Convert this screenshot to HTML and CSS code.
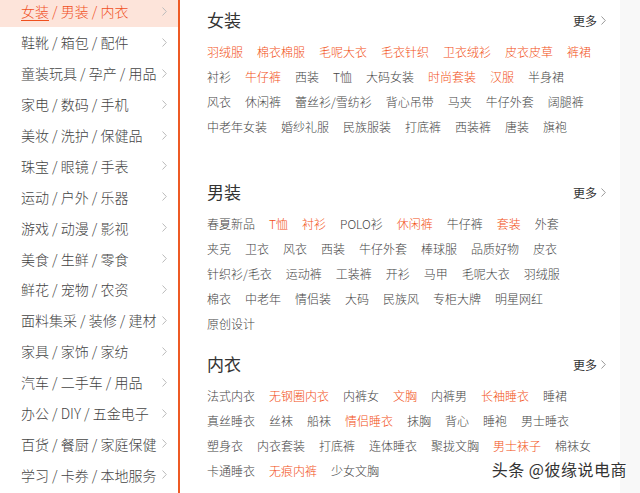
FILE: index.html
```html
<!DOCTYPE html>
<html lang="zh">
<head>
<meta charset="utf-8">
<link rel="stylesheet" href="styles.css">
</head>
<body>
<div class="page">
  <ul class="side">
    <li class="item active"><span class="label"><span class="hover">女装</span> / 男装 / 内衣</span><svg class="chev" viewBox="0 0 5 9"><path d="M0.5 0.5 L4.3 4.5 L0.5 8.5"/></svg></li>
    <li class="item"><span class="label">鞋靴 / 箱包 / 配件</span><svg class="chev" viewBox="0 0 5 9"><path d="M0.5 0.5 L4.3 4.5 L0.5 8.5"/></svg></li>
    <li class="item"><span class="label">童装玩具 / 孕产 / 用品</span><svg class="chev" viewBox="0 0 5 9"><path d="M0.5 0.5 L4.3 4.5 L0.5 8.5"/></svg></li>
    <li class="item"><span class="label">家电 / 数码 / 手机</span><svg class="chev" viewBox="0 0 5 9"><path d="M0.5 0.5 L4.3 4.5 L0.5 8.5"/></svg></li>
    <li class="item"><span class="label">美妆 / 洗护 / 保健品</span><svg class="chev" viewBox="0 0 5 9"><path d="M0.5 0.5 L4.3 4.5 L0.5 8.5"/></svg></li>
    <li class="item"><span class="label">珠宝 / 眼镜 / 手表</span><svg class="chev" viewBox="0 0 5 9"><path d="M0.5 0.5 L4.3 4.5 L0.5 8.5"/></svg></li>
    <li class="item"><span class="label">运动 / 户外 / 乐器</span><svg class="chev" viewBox="0 0 5 9"><path d="M0.5 0.5 L4.3 4.5 L0.5 8.5"/></svg></li>
    <li class="item"><span class="label">游戏 / 动漫 / 影视</span><svg class="chev" viewBox="0 0 5 9"><path d="M0.5 0.5 L4.3 4.5 L0.5 8.5"/></svg></li>
    <li class="item"><span class="label">美食 / 生鲜 / 零食</span><svg class="chev" viewBox="0 0 5 9"><path d="M0.5 0.5 L4.3 4.5 L0.5 8.5"/></svg></li>
    <li class="item"><span class="label">鲜花 / 宠物 / 农资</span><svg class="chev" viewBox="0 0 5 9"><path d="M0.5 0.5 L4.3 4.5 L0.5 8.5"/></svg></li>
    <li class="item"><span class="label">面料集采 / 装修 / 建材</span><svg class="chev" viewBox="0 0 5 9"><path d="M0.5 0.5 L4.3 4.5 L0.5 8.5"/></svg></li>
    <li class="item"><span class="label">家具 / 家饰 / 家纺</span><svg class="chev" viewBox="0 0 5 9"><path d="M0.5 0.5 L4.3 4.5 L0.5 8.5"/></svg></li>
    <li class="item"><span class="label">汽车 / 二手车 / 用品</span><svg class="chev" viewBox="0 0 5 9"><path d="M0.5 0.5 L4.3 4.5 L0.5 8.5"/></svg></li>
    <li class="item"><span class="label">办公 / DIY / 五金电子</span><svg class="chev" viewBox="0 0 5 9"><path d="M0.5 0.5 L4.3 4.5 L0.5 8.5"/></svg></li>
    <li class="item"><span class="label">百货 / 餐厨 / 家庭保健</span><svg class="chev" viewBox="0 0 5 9"><path d="M0.5 0.5 L4.3 4.5 L0.5 8.5"/></svg></li>
    <li class="item"><span class="label">学习 / 卡券 / 本地服务</span><svg class="chev" viewBox="0 0 5 9"><path d="M0.5 0.5 L4.3 4.5 L0.5 8.5"/></svg></li>
  </ul>

  <div class="panel">
    <section class="sec">
      <div class="head"><h2>女装</h2><a class="more">更多<svg class="chev-more" viewBox="0 0 5 9"><path d="M0.5 0.5 L4.3 4.5 L0.5 8.5"/></svg></a></div>
      <div class="tags">
        <a class="hot">羽绒服</a><a class="hot">棉衣棉服</a><a class="hot">毛呢大衣</a><a class="hot">毛衣针织</a><a class="hot">卫衣绒衫</a><a class="hot">皮衣皮草</a><a class="hot">裤裙</a>
        <a>衬衫</a><a class="hot">牛仔裤</a><a>西装</a><a>T恤</a><a>大码女装</a><a class="hot">时尚套装</a><a class="hot">汉服</a><a>半身裙</a>
        <a>风衣</a><a>休闲裤</a><a>蕾丝衫/雪纺衫</a><a>背心吊带</a><a>马夹</a><a>牛仔外套</a><a>阔腿裤</a>
        <a>中老年女装</a><a>婚纱礼服</a><a>民族服装</a><a>打底裤</a><a>西装裤</a><a>唐装</a><a>旗袍</a>
      </div>
    </section>
    <section class="sec">
      <div class="head"><h2>男装</h2><a class="more">更多<svg class="chev-more" viewBox="0 0 5 9"><path d="M0.5 0.5 L4.3 4.5 L0.5 8.5"/></svg></a></div>
      <div class="tags">
        <a>春夏新品</a><a class="hot">T恤</a><a class="hot">衬衫</a><a>POLO衫</a><a class="hot">休闲裤</a><a>牛仔裤</a><a class="hot">套装</a><a>外套</a>
        <a>夹克</a><a>卫衣</a><a>风衣</a><a>西装</a><a>牛仔外套</a><a>棒球服</a><a>品质好物</a><a>皮衣</a>
        <a>针织衫/毛衣</a><a>运动裤</a><a>工装裤</a><a>开衫</a><a>马甲</a><a>毛呢大衣</a><a>羽绒服</a>
        <a>棉衣</a><a>中老年</a><a>情侣装</a><a>大码</a><a>民族风</a><a>专柜大牌</a><a>明星网红</a>
        <a>原创设计</a>
      </div>
    </section>
    <section class="sec">
      <div class="head"><h2>内衣</h2><a class="more">更多<svg class="chev-more" viewBox="0 0 5 9"><path d="M0.5 0.5 L4.3 4.5 L0.5 8.5"/></svg></a></div>
      <div class="tags">
        <a>法式内衣</a><a class="hot">无钢圈内衣</a><a>内裤女</a><a class="hot">文胸</a><a>内裤男</a><a class="hot">长袖睡衣</a><a>睡裙</a>
        <a>真丝睡衣</a><a>丝袜</a><a>船袜</a><a class="hot">情侣睡衣</a><a>抹胸</a><a>背心</a><a>睡袍</a><a>男士睡衣</a>
        <a>塑身衣</a><a>内衣套装</a><a>打底裤</a><a>连体睡衣</a><a>聚拢文胸</a><a class="hot">男士袜子</a><a>棉袜女</a>
        <a>卡通睡衣</a><a class="hot">无痕内裤</a><a>少女文胸</a>
      </div>
    </section>
  </div>
  <div class="strip"></div>
  <div class="watermark">头条 @彼缘说电商</div>
</div>
</body>
</html>
```

FILE: styles.css
```css
* { box-sizing: border-box; }
html, body {
  margin: 0;
  padding: 0;
  width: 640px;
  height: 493px;
  overflow: hidden;
  background: #fff;
  font-family: "Noto Sans CJK SC", "Liberation Sans", sans-serif;
}
.page {
  position: relative;
  display: flex;
  width: 640px;
  height: 493px;
  overflow: hidden;
}
.side {
  list-style: none;
  margin: -4px 0 0 0;
  padding: 0;
  width: 180px;
  flex: none;
  border-right: 2px solid #ee5a24;
  background: #fff;
}
.item {
  display: flex;
  align-items: center;
  justify-content: space-between;
  height: 30.9px;
  padding: 0 11px 0 21px;
  font-size: 14px;
  font-weight: 300;
  color: #444;
  white-space: nowrap;
}
.item.active {
  background: #fde4da;
  color: #f0501e;
}
.hover { text-decoration: underline; text-underline-offset: 3px; }
.chev {
  width: 5px;
  height: 9px;
  flex: none;
}
.chev path, .chev-more path {
  fill: none;
  stroke: #bbb;
  stroke-width: 1;
}
.panel {
  flex: 1;
  padding: 8px 14px 0 27px;
  background: #fff;
}
.sec {
  height: 172px;
}
.head {
  display: flex;
  align-items: center;
  justify-content: space-between;
  height: 24px;
  margin-bottom: 7px;
}
.head h2 {
  margin: 0;
  font-size: 17px;
  font-weight: normal;
  color: #333;
  line-height: 24px;
}
.more {
  display: flex;
  align-items: center;
  gap: 4px;
  font-size: 12px;
  color: #333;
}
.chev-more {
  width: 5px;
  height: 9px;
}
.chev-more path { stroke: #999; }
.tags {
  display: flex;
  flex-wrap: wrap;
  font-size: 12px;
  font-weight: 300;
  line-height: 25px;
}
.tags a {
  margin-right: 14px;
  color: #444;
  white-space: nowrap;
}
.tags a.hot {
  color: #f24f14;
}
.strip {
  width: 20px;
  flex: none;
  background: #f8f8f8;
}
.watermark {
  position: absolute;
  right: 13px;
  bottom: 12px;
  font-size: 16px;
  color: #333;
  letter-spacing: 0.5px;
  text-shadow: 0 0 2px #fff, 0 0 2px #fff, 1px 1px 0 #fff, -1px -1px 0 #fff;
}
```
